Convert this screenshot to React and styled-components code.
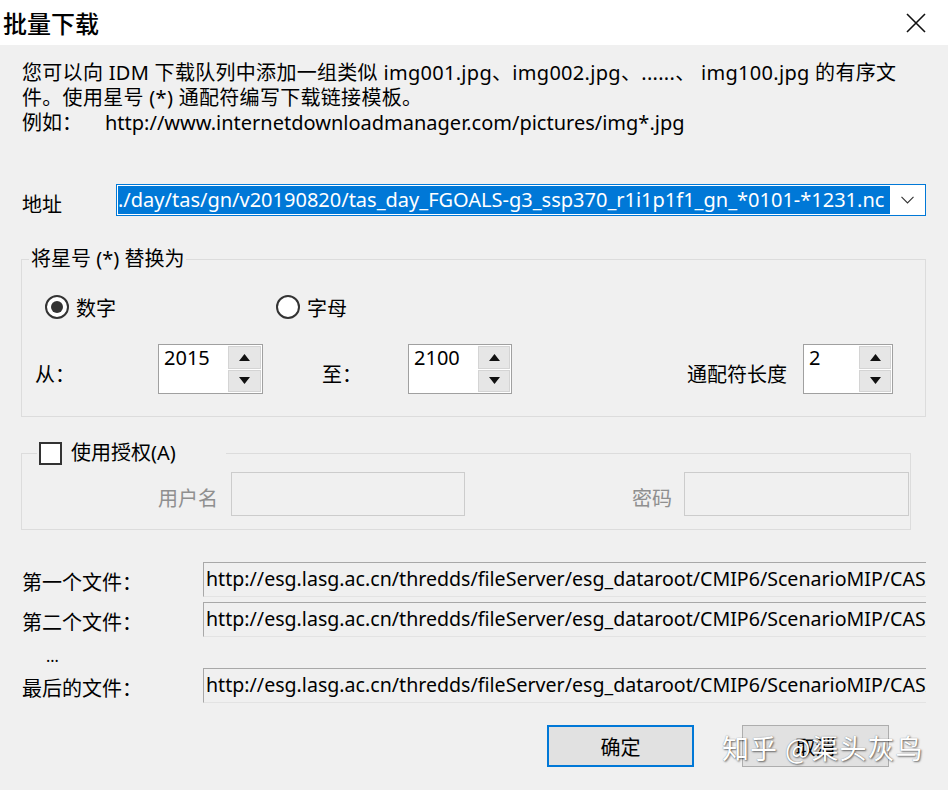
import React from "react";
import styled, { createGlobalStyle } from "styled-components";

const Global = createGlobalStyle`
  html, body { margin: 0; padding: 0; background: #f0f0f0; }
  body { font-family: "Noto Sans", "Noto Sans CJK SC", sans-serif; color: #000; }
  * { box-sizing: border-box; }
`;

const Window = styled.div`
  position: relative;
  width: 948px;
  height: 790px;
  display: flex;
  flex-direction: column;
  overflow: hidden;
  background: #f0f0f0;
`;

const TitleBar = styled.div`
  height: 45px;
  background: #fff;
  display: flex;
  align-items: center;
  justify-content: space-between;
  padding: 0 22px 0 3px;
  flex-shrink: 0;
`;

const Title = styled.div`
  font-family: "Noto Sans CJK SC", sans-serif;
  font-size: 24px;
  font-weight: 500;
`;

const Body = styled.div`
  flex: 1;
  padding: 0 22px 0 21px;
  font-size: 20px;
`;

const Intro = styled.div`
  margin-top: 15px;
  padding-left: 1px;
  line-height: 25px;
`;

const Line = styled.div`
  white-space: nowrap;
  letter-spacing: ${(p) => p.ls || 0}px;
`;

const Gap = styled.span`
  display: inline-block;
  width: ${(p) => p.w}px;
`;

const AddressRow = styled.div`
  margin-top: 49px;
  display: flex;
  align-items: flex-start;
`;

const AddrLabel = styled.div`
  width: 95px;
  padding: 9px 0 0 1px;
  line-height: 24px;
`;

const Combo = styled.div`
  width: 810px;
  height: 32px;
  border: 1px solid #0078d7;
  background: #fff;
  display: flex;
  align-items: center;
  padding: 1px;
`;

const Selected = styled.div`
  flex: 0 0 772px;
  height: 28px;
  background: #0078d7;
  color: #fff;
  line-height: 28px;
  white-space: nowrap;
  overflow: hidden;
`;

const Chevron = styled.div`
  flex: 1;
  display: flex;
  justify-content: center;
`;

const Group = styled.fieldset`
  margin: ${(p) => p.mt}px 0 0 0;
  width: ${(p) => p.w}px;
  border: 1px solid #dcdcdc;
  padding: 0 0 ${(p) => p.pb}px 0;
  min-width: 0;
`;

const Legend = styled.legend`
  margin-left: ${(p) => p.ml}px;
  padding: 0 ${(p) => p.pr}px 0 2px;
  line-height: 24px;
  display: flex;
  align-items: center;
  gap: 9px;
`;

const RadioRow = styled.div`
  display: flex;
  margin-top: 24px;
  padding-left: 23px;
`;

const RadioItem = styled.div`
  width: 231px;
  display: flex;
  align-items: center;
  gap: 7px;
  height: 24px;
`;

const RadioCircle = styled.span`
  width: 24px;
  height: 24px;
  border-radius: 50%;
  border: 2px solid #333;
  background: #fff;
  display: flex;
  align-items: center;
  justify-content: center;
  &::after {
    content: "";
    width: 12px;
    height: 12px;
    border-radius: 50%;
    background: ${(p) => (p.on ? "#333" : "transparent")};
  }
`;

const SpinRow = styled.div`
  display: flex;
  align-items: center;
  margin-top: 25px;
  padding-left: 13px;
`;

const SpinLabel = styled.div`
  width: ${(p) => p.w}px;
  margin-left: ${(p) => p.ml || 0}px;
  padding-top: 9px;
  white-space: nowrap;
`;

const Spinner = styled.div`
  display: flex;
  height: 50px;
  width: ${(p) => p.w}px;
  border: 1px solid #a0a0a0;
  background: #fff;
`;

const SpinValue = styled.div`
  flex: 1;
  padding: 1px 0 0 5px;
  line-height: 24px;
`;

const SpinButtons = styled.div`
  width: ${(p) => p.w}px;
  display: flex;
  flex-direction: column;
  gap: 1px;
  padding: 1px;
  background: #fff;
`;

const SpinBtn = styled.div`
  flex: 1;
  background: #e6e6e6;
  border: 1px solid #d4d4d4;
  display: flex;
  align-items: center;
  justify-content: center;
`;

const Check = styled.span`
  width: 23px;
  height: 23px;
  border: 2px solid #333;
  background: #fff;
`;

const AuthRow = styled.div`
  display: flex;
  align-items: center;
  margin-top: 7px;
`;

const AuthLabel = styled.div`
  width: ${(p) => p.w}px;
  text-align: right;
  padding-right: ${(p) => p.pr}px;
  padding-top: 6px;
  color: #8f8f8f;
`;

const Disabled = styled.div`
  width: ${(p) => p.w}px;
  height: 44px;
  border: 1px solid #cccccc;
  background: #f0f0f0;
`;

const Files = styled.div`
  margin-top: 32px;
  display: flex;
  flex-direction: column;
`;

const FileRow = styled.div`
  display: flex;
  align-items: center;
  margin-top: ${(p) => p.mt}px;
`;

const FileLabel = styled.div`
  width: 182px;
  padding: 4px 0 0 1px;
`;

const FileField = styled.div`
  width: 723px;
  height: 35px;
  border-top: 1px solid #a8a8a8;
  border-left: 1px solid #a8a8a8;
  border-bottom: 1px solid #e3e3e3;
  padding: 0 0 0 2px;
  line-height: 32px;
  font-size: 19.6px;
  white-space: nowrap;
  overflow: hidden;
`;

const Ellipsis = styled.div`
  height: 31px;
  padding-left: 25px;
  line-height: 22px;
  padding-top: 8px;
  font-size: 16px;
`;

const Buttons = styled.div`
  display: flex;
  gap: 48px;
  margin-top: 22px;
  padding-left: 526px;
`;

const Button = styled.div`
  width: 147px;
  height: 42px;
  background: #e1e1e1;
  border: ${(p) => (p.primary ? "2px solid #0078d7" : "1px solid #adadad")};
  display: flex;
  align-items: center;
  justify-content: center;
  font-family: "Noto Sans CJK SC", sans-serif;
  font-size: 20px;
`;

const Watermark = styled.div`
  position: absolute;
  left: 722px;
  top: 728px;
  font-family: "Noto Sans CJK SC", sans-serif;
  font-size: 27px;
  color: #fff;
  text-shadow: 1px 1px 2px rgba(0, 0, 0, 0.55), 0 0 1px rgba(0, 0, 0, 0.4);
  white-space: nowrap;
  letter-spacing: 1px;
`;

const Up = () => (
  <svg width="11" height="7" viewBox="0 0 11 7">
    <polygon points="5.5,0 11,7 0,7" fill="#111" />
  </svg>
);
const Down = () => (
  <svg width="11" height="7" viewBox="0 0 11 7">
    <polygon points="0,0 11,0 5.5,7" fill="#111" />
  </svg>
);

const Spin = ({ value, w, bw }) => (
  <Spinner w={w}>
    <SpinValue>{value}</SpinValue>
    <SpinButtons w={bw}>
      <SpinBtn><Up /></SpinBtn>
      <SpinBtn><Down /></SpinBtn>
    </SpinButtons>
  </Spinner>
);

const url =
  "http://esg.lasg.ac.cn/thredds/fileServer/esg_dataroot/CMIP6/ScenarioMIP/CAS/FGOALS-g3/ssp370/r1i1p1f1/day/tas/gn/v20190820/tas_day_FGOALS-g3_ssp370_r1i1p1f1_gn_20150101-20151231.nc";

export default function App() {
  return (
    <>
      <Global />
      <Window>
        <TitleBar>
          <Title>批量下载</Title>
          <svg width="20" height="20" viewBox="0 0 20 20">
            <path d="M1 1 L19 19 M19 1 L1 19" stroke="#111" strokeWidth="1.6" />
          </svg>
        </TitleBar>
        <Body>
          <Intro>
            <Line ls={0.3}>您可以向 IDM 下载队列中添加一组类似 img001.jpg、img002.jpg、......、 img100.jpg 的有序文</Line>
            <Line ls={0.3}>件。使用星号 (*) 通配符编写下载链接模板。</Line>
            <Line>例如：<Gap w={23} />http://www.internetdownloadmanager.com/pictures/img*.jpg</Line>
          </Intro>

          <AddressRow>
            <AddrLabel>地址</AddrLabel>
            <Combo>
              <Selected>./day/tas/gn/v20190820/tas_day_FGOALS-g3_ssp370_r1i1p1f1_gn_*0101-*1231.nc</Selected>
              <Chevron>
                <svg width="13" height="8" viewBox="0 0 13 8">
                  <path d="M0.5 0.8 L6.5 7 L12.5 0.8" fill="none" stroke="#333" strokeWidth="1.1" />
                </svg>
              </Chevron>
            </Combo>
          </AddressRow>

          <Group mt={30} w={905} pb={22}>
            <Legend ml={7} pr={2}>将星号 (*) 替换为</Legend>
            <RadioRow>
              <RadioItem><RadioCircle on />数字</RadioItem>
              <RadioItem><RadioCircle />字母</RadioItem>
            </RadioRow>
            <SpinRow>
              <SpinLabel w={123}>从：</SpinLabel>
              <Spin value="2015" w={105} bw={35} />
              <SpinLabel w={86} ml={59}>至：</SpinLabel>
              <Spin value="2100" w={104} bw={34} />
              <SpinLabel w={116} ml={175}>通配符长度</SpinLabel>
              <Spin value="2" w={90} bw={34} />
            </SpinRow>
          </Group>

          <Group mt={24} w={890} pb={13}>
            <Legend ml={15} pr={50}><Check />使用授权(A)</Legend>
            <AuthRow>
              <AuthLabel w={209} pr={13}>用户名</AuthLabel>
              <Disabled w={234} />
              <AuthLabel w={219} pr={12}>密码</AuthLabel>
              <Disabled w={225} />
            </AuthRow>
          </Group>

          <Files>
            <FileRow mt={0}>
              <FileLabel>第一个文件：</FileLabel>
              <FileField>{url}</FileField>
            </FileRow>
            <FileRow mt={5}>
              <FileLabel>第二个文件：</FileLabel>
              <FileField>{url}</FileField>
            </FileRow>
            <Ellipsis>...</Ellipsis>
            <FileRow mt={0}>
              <FileLabel>最后的文件：</FileLabel>
              <FileField>{url}</FileField>
            </FileRow>
          </Files>

          <Buttons>
            <Button primary>确定</Button>
            <Button>取消</Button>
          </Buttons>
        </Body>
        <Watermark>知乎 @渠头灰鸟</Watermark>
      </Window>
    </>
  );
}
